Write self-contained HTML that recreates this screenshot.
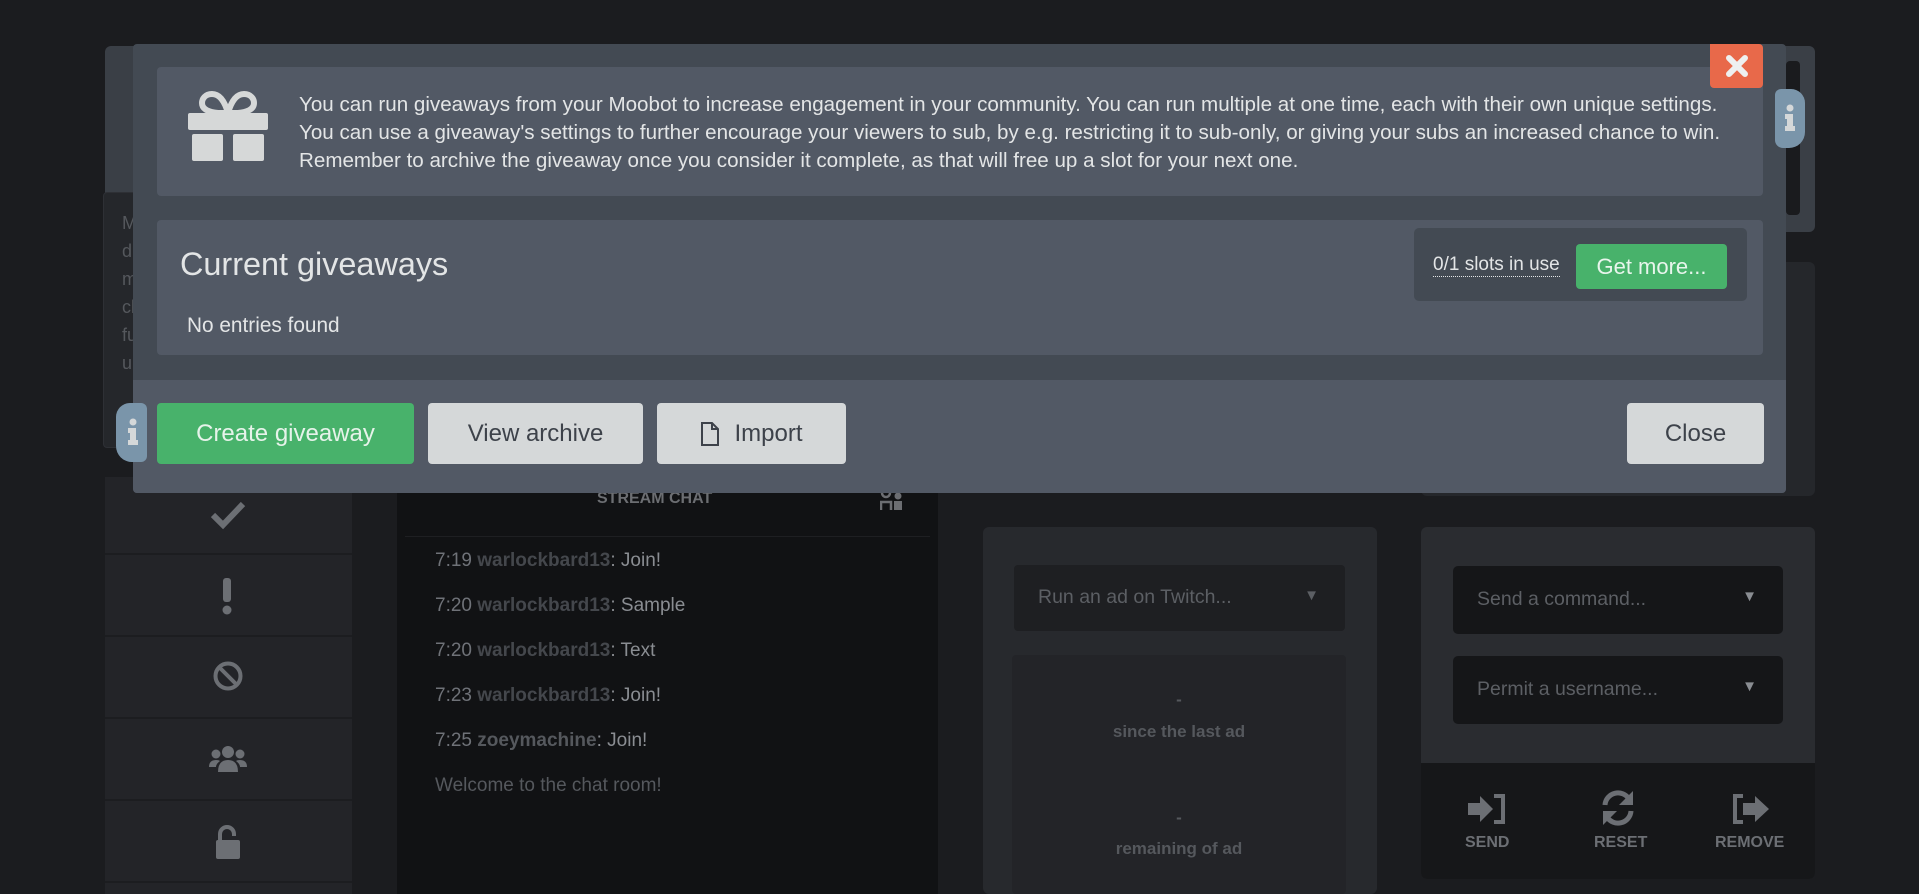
<!DOCTYPE html>
<html><head><meta charset="utf-8"><style>
*{box-sizing:border-box;margin:0;padding:0}
body{width:1919px;height:894px;overflow:hidden;background:#1b1c1f;font-family:"Liberation Sans",sans-serif;position:relative}
.a{position:absolute}
.btn{position:absolute;border-radius:4px;display:flex;align-items:center;justify-content:center;font-size:24px;color:#3d424a;background:#d5d8d9}
</style></head><body>
<div class="a" style="left:105px;top:46px;width:1710px;height:186px;background:#3a3f46;border-radius:6px"></div>
<div class="a" style="left:1786px;top:61px;width:14px;height:154px;background:#1a1b1e;border-radius:4px"></div>
<div class="a" style="left:103px;top:192px;width:40px;height:256px;background:#25272b;border:1px solid #2e3035;border-radius:4px;color:#55585d;font-size:18px;line-height:28px;padding:16px 0 0 18px">M<br>d<br>m<br>cl<br>fu<br>u</div>
<div class="a" style="left:1421px;top:262px;width:394px;height:234px;background:#25272b;border-radius:6px"></div>
<div class="a" style="left:105px;top:477px;width:247px;height:417px;background:#232428"></div>
<div class="a" style="left:105px;top:553px;width:247px;height:2px;background:#1c1d20"></div>
<div class="a" style="left:105px;top:635px;width:247px;height:2px;background:#1c1d20"></div>
<div class="a" style="left:105px;top:717px;width:247px;height:2px;background:#1c1d20"></div>
<div class="a" style="left:105px;top:799px;width:247px;height:2px;background:#1c1d20"></div>
<div class="a" style="left:105px;top:881px;width:247px;height:2px;background:#1c1d20"></div>
<svg class="a" style="left:210px;top:500px" width="36" height="30" viewBox="0 0 36 30"><path d="M3 15 L13 25 L33 4" stroke="#6c6f74" stroke-width="6" fill="none"/></svg>
<svg class="a" style="left:220px;top:578px" width="14" height="38" viewBox="0 0 14 38"><rect x="3" y="0" width="8" height="24" rx="3" fill="#6c6f74"/><circle cx="7" cy="32" r="4.5" fill="#6c6f74"/></svg>
<svg class="a" style="left:212px;top:660px" width="32" height="32" viewBox="0 0 32 32"><circle cx="16" cy="16" r="12.5" stroke="#6c6f74" stroke-width="4" fill="none"/><path d="M7 7 L25 25" stroke="#6c6f74" stroke-width="4"/></svg>
<svg class="a" style="left:209px;top:745px" width="38" height="28" viewBox="0 0 38 28"><circle cx="19" cy="7" r="6" fill="#6c6f74"/><circle cx="7" cy="9" r="4.5" fill="#6c6f74"/><circle cx="31" cy="9" r="4.5" fill="#6c6f74"/><path d="M9 27 Q9 15 19 15 Q29 15 29 27Z M0 22 Q0 15 7 15 Q10 15 11 16 Q7 19 7 22Z M38 22 Q38 15 31 15 Q28 15 27 16 Q31 19 31 22Z" fill="#6c6f74"/></svg>
<svg class="a" style="left:215px;top:825px" width="26" height="34" viewBox="0 0 26 34"><path d="M5 16 V9 A7 7 0 0 1 19 9 V11" stroke="#6c6f74" stroke-width="4" fill="none"/><rect x="1" y="15" width="24" height="19" rx="2" fill="#6c6f74"/></svg>
<div class="a" style="left:397px;top:477px;width:541px;height:417px;background:#111214"></div>
<div class="a" style="left:597px;top:490px;font-size:16px;font-weight:bold;color:#6c6e72">STREAM CHAT</div>
<svg class="a" style="left:880px;top:488px" width="24" height="22" viewBox="0 0 24 22"><circle cx="6" cy="5" r="4" stroke="#6c6e72" stroke-width="2.5" fill="none"/><path d="M1 22 V14 H11 V22" stroke="#6c6e72" stroke-width="2.5" fill="none"/><circle cx="18" cy="8" r="3.5" fill="#6c6e72"/><rect x="14" y="13" width="8" height="9" fill="#6c6e72"/></svg>
<div class="a" style="left:405px;top:536px;width:525px;height:1px;background:#1e1f22"></div>
<div class="a" style="left:435px;top:538px;font-size:19px;line-height:45px;color:#8a8d92">
<div><span style="color:#6f7278">7:19</span> <b style="color:#44474c">warlockbard13</b>: Join!</div>
<div><span style="color:#6f7278">7:20</span> <b style="color:#44474c">warlockbard13</b>: Sample</div>
<div><span style="color:#6f7278">7:20</span> <b style="color:#44474c">warlockbard13</b>: Text</div>
<div><span style="color:#6f7278">7:23</span> <b style="color:#44474c">warlockbard13</b>: Join!</div>
<div><span style="color:#6f7278">7:25</span> <b style="color:#55585d">zoeymachine</b>: Join!</div>
<div style="color:#55585d">Welcome to the chat room!</div>
</div>
<div class="a" style="left:983px;top:527px;width:394px;height:367px;background:#27292d;border-radius:6px"></div>
<div class="a" style="left:1014px;top:565px;width:331px;height:66px;background:#1e1f22;border-radius:4px;color:#5c5f64;font-size:19.5px;padding:21px 0 0 24px">Run an ad on Twitch...<span style="position:absolute;right:26px;top:22px;font-size:15px">▼</span></div>
<div class="a" style="left:1012px;top:655px;width:334px;height:239px;background:#232428;border-radius:4px;color:#55585d;font-size:17px;font-weight:bold;text-align:center">
<div style="position:absolute;top:35px;width:100%">-</div>
<div style="position:absolute;top:67px;width:100%">since the last ad</div>
<div style="position:absolute;top:153px;width:100%">-</div>
<div style="position:absolute;top:184px;width:100%">remaining of ad</div>
</div>
<div class="a" style="left:1421px;top:527px;width:394px;height:352px;background:#2a2c30;border-radius:6px;overflow:hidden">
<div class="a" style="left:0;top:236px;width:394px;height:116px;background:#161719"></div>
</div>
<div class="a" style="left:1453px;top:566px;width:330px;height:68px;background:#151618;border-radius:5px;color:#5c5f64;font-size:19.5px;padding:22px 0 0 24px">Send a command...<span style="position:absolute;right:26px;top:22px;font-size:15px;color:#8a8d92">▼</span></div>
<div class="a" style="left:1453px;top:656px;width:330px;height:68px;background:#151618;border-radius:5px;color:#5c5f64;font-size:19.5px;padding:22px 0 0 24px">Permit a username...<span style="position:absolute;right:26px;top:22px;font-size:15px;color:#8a8d92">▼</span></div>
<svg class="a" style="left:1466px;top:793px" width="42" height="32" viewBox="0 0 42 32"><path d="M2 10 H14 V3 L27 16 L14 29 V22 H2Z" fill="#6c6f74"/><path d="M28 3 H37 V29 H28" stroke="#6c6f74" stroke-width="4" fill="none"/></svg>
<svg class="a" style="left:1599px;top:789px" width="38" height="38" viewBox="0 0 38 38"><path d="M6 16 A13 13 0 0 1 30 10" stroke="#6c6f74" stroke-width="5" fill="none"/><path d="M34 2 V16 H20Z" fill="#6c6f74"/><path d="M32 22 A13 13 0 0 1 8 28" stroke="#6c6f74" stroke-width="5" fill="none"/><path d="M4 36 V22 H18Z" fill="#6c6f74"/></svg>
<svg class="a" style="left:1731px;top:793px" width="40" height="32" viewBox="0 0 40 32"><path d="M12 3 H4 V29 H12" stroke="#6c6f74" stroke-width="4" fill="none"/><path d="M12 10 H24 V3 L38 16 L24 29 V22 H12Z" fill="#6c6f74"/></svg>
<div class="a" style="left:1421px;top:834px;width:394px;font-size:16px;font-weight:bold;color:#6c6f74">
<span class="a" style="left:44px">SEND</span><span class="a" style="left:173px">RESET</span><span class="a" style="left:294px">REMOVE</span></div>
<div class="a" style="left:1368px;top:487px;width:6px;height:6px;background:#3a3c40"></div>

<div class="a" style="left:133px;top:44px;width:1653px;height:449px;background:#434a53;border-radius:4px;overflow:hidden">
<div class="a" style="left:0;top:336px;width:1653px;height:113px;background:#525965"></div>
</div>
<div class="a" style="left:157px;top:67px;width:1606px;height:129px;background:#525965;border-radius:4px"></div>
<svg class="a" style="left:188px;top:91px" width="80" height="70" viewBox="0 0 80 70"><path d="M40 22 C36 8 30 3 24 3 C17 3 14 8 14 12 C14 18 20 21 30 22Z M40 22 C44 8 50 3 56 3 C63 3 66 8 66 12 C66 18 60 21 50 22Z" stroke="#d6d8d8" stroke-width="6" fill="none"/><rect x="0" y="22" width="80" height="17" rx="2" fill="#d6d8d8"/><rect x="4" y="43" width="31" height="27" rx="2" fill="#d6d8d8"/><rect x="45" y="43" width="31" height="27" rx="2" fill="#d6d8d8"/></svg>
<div class="a" style="left:299px;top:91px;font-size:20.6px;line-height:28px;color:#e3e5e6;white-space:nowrap">You can run giveaways from your Moobot to increase engagement in your community. You can run multiple at one time, each with their own unique settings.<br>You can use a giveaway's settings to further encourage your viewers to sub, by e.g. restricting it to sub-only, or giving your subs an increased chance to win.<br>Remember to archive the giveaway once you consider it complete, as that will free up a slot for your next one.</div>
<div class="a" style="left:157px;top:220px;width:1606px;height:135px;background:#525965;border-radius:4px"></div>
<div class="a" style="left:180px;top:246px;font-size:32.4px;color:#e3e5e6">Current giveaways</div>
<div class="a" style="left:187px;top:314px;font-size:20.8px;color:#e3e5e6">No entries found</div>
<div class="a" style="left:1414px;top:228px;width:333px;height:73px;background:#434a53;border-radius:5px"></div>
<div class="a" style="left:1433px;top:253px;font-size:19px;color:#e3e5e6;border-bottom:1px dotted #e3e5e6;line-height:23px">0/1 slots in use</div>
<div class="a" style="left:1576px;top:244px;width:151px;height:45px;background:#48b26b;border-radius:4px;color:#e8f5ec;font-size:22px;display:flex;align-items:center;justify-content:center">Get more...</div>
<div class="btn" style="left:157px;top:403px;width:257px;height:61px;background:#48b26b;color:#e6f3ea">Create giveaway</div>
<div class="btn" style="left:428px;top:403px;width:215px;height:61px">View archive</div>
<div class="btn" style="left:657px;top:403px;width:189px;height:61px"><svg width="20" height="26" viewBox="0 0 20 26" style="margin-right:14px"><path d="M2 2 H12 L18 8 V24 H2Z M12 2 V8 H18" stroke="#3d424a" stroke-width="2" fill="none"/></svg>Import</div>
<div class="btn" style="left:1627px;top:403px;width:137px;height:61px">Close</div>
<div class="a" style="left:1710px;top:44px;width:53px;height:44px;background:#e8694a;border-radius:0 4px 4px 4px"></div>
<svg class="a" style="left:1725px;top:54px" width="24" height="24" viewBox="0 0 24 24"><path d="M4 4 L20 20 M20 4 L4 20" stroke="#eef0f0" stroke-width="6" stroke-linecap="round"/></svg>
<div class="a" style="left:1775px;top:89px;width:30px;height:59px;background:#7a95aa;border-radius:6px 14px 16px 8px"></div>
<svg class="a" style="left:1783px;top:104px" width="14" height="28" viewBox="0 0 14 28"><circle cx="7" cy="4" r="3.5" fill="#d5d8d9"/><path d="M2 10 H10 V22 H12 V27 H2 V22 H4 V15 H2Z" fill="#d5d8d9"/></svg>
<div class="a" style="left:116px;top:403px;width:31px;height:59px;background:#7a95aa;border-radius:14px 6px 6px 16px"></div>
<svg class="a" style="left:126px;top:418px" width="14" height="28" viewBox="0 0 14 28"><circle cx="7" cy="4" r="3.5" fill="#d5d8d9"/><path d="M2 10 H10 V22 H12 V27 H2 V22 H4 V15 H2Z" fill="#d5d8d9"/></svg>
</body></html>
